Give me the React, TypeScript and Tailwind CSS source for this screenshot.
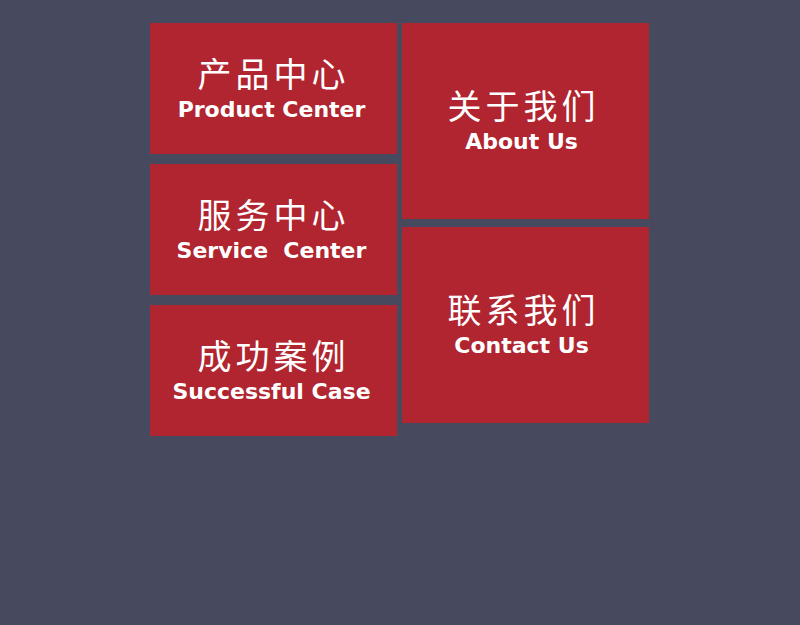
const leftTiles = [
  { zh: "产品中心", en: "Product Center" },
  { zh: "服务中心", en: "Service  Center" },
  { zh: "成功案例", en: "Successful Case" },
];

const rightTiles = [
  { zh: "关于我们", en: "About Us" },
  { zh: "联系我们", en: "Contact Us" },
];

function Tile({ zh, en, className }: { zh: string; en: string; className: string }) {
  return (
    <div
      className={`flex w-[247px] flex-col items-center justify-center bg-[#b0252f] text-white ${className}`}
    >
      <div className="pl-[4px] text-[34px] leading-[44px] tracking-[4px] font-['Noto_Sans_CJK_SC',sans-serif]">
        {zh}
      </div>
      <div className="whitespace-pre text-[22px] font-bold leading-[30px] font-['DejaVu_Sans',sans-serif]">
        {en}
      </div>
    </div>
  );
}

export default function App() {
  return (
    <div className="h-[625px] w-[800px] bg-[#474a5e] pl-[150px] pt-[23px]">
      <div className="flex gap-[5px]">
        <div className="flex flex-col gap-[10px]">
          {leftTiles.map((t) => (
            <Tile key={t.en} zh={t.zh} en={t.en} className="h-[131px] pb-[2px] pr-[4px]" />
          ))}
        </div>
        <div className="flex flex-col gap-[8px]">
          {rightTiles.map((t) => (
            <Tile key={t.en} zh={t.zh} en={t.en} className="h-[196px] pb-[2px] pr-[8px]" />
          ))}
        </div>
      </div>
    </div>
  );
}
